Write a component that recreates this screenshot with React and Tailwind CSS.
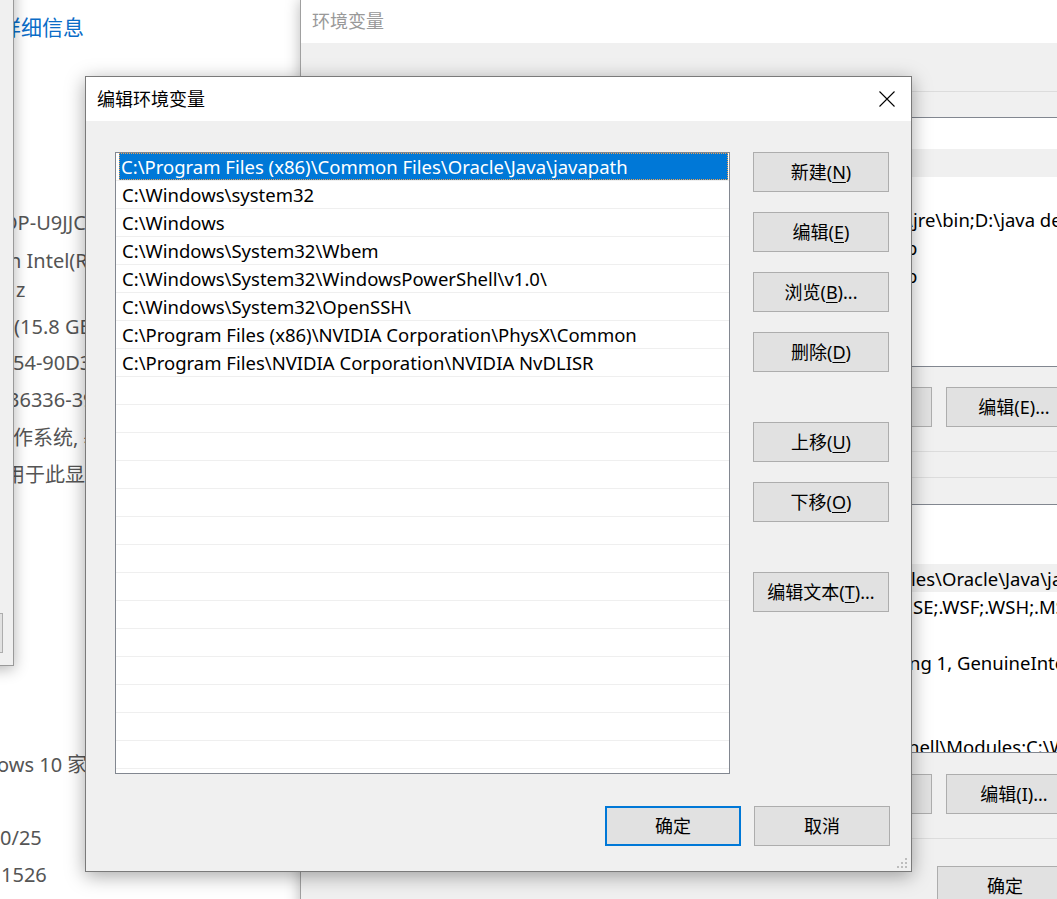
import React from 'react';

const paths = [
  'C:\\Program Files (x86)\\Common Files\\Oracle\\Java\\javapath',
  'C:\\Windows\\system32',
  'C:\\Windows',
  'C:\\Windows\\System32\\Wbem',
  'C:\\Windows\\System32\\WindowsPowerShell\\v1.0\\',
  'C:\\Windows\\System32\\OpenSSH\\',
  'C:\\Program Files (x86)\\NVIDIA Corporation\\PhysX\\Common',
  'C:\\Program Files\\NVIDIA Corporation\\NVIDIA NvDLISR',
];

// tails of the values that peek out from behind the dialog
const userVars = [
  { t: '' },
  { t: '' },
  { t: '\\jre\\bin;D:\\java development', pl: 'pl-[563px]' },
  { t: 'p', pl: 'pl-[563px]' },
  { t: 'p', pl: 'pl-[563px]' },
  { t: '' },
  { t: '' },
  { t: '' },
  { t: '' },
];
const sysVars = [
  { t: '' },
  { t: 'les\\Oracle\\Java\\javapath;C:\\Windows', pl: 'pl-[568px]' },
  { t: 'JSE;.WSF;.WSH;.MSC', pl: 'pl-[565px]' },
  { t: '' },
  { t: 'ng 1, GenuineIntel', pl: 'pl-[566px]' },
  { t: '' },
  { t: '' },
  { t: 'hell\\Modules;C:\\Windows', pl: 'pl-[565px]' },
];

function Key({ k }) {
  return <span className="underline underline-offset-[3px] decoration-1">{k}</span>;
}

function WinButton({ children, def }) {
  return (
    <div
      className={
        'h-[40px] w-[136px] shrink-0 flex items-center justify-center bg-[#e1e1e1] text-[18px] text-black leading-none ' +
        (def ? 'border-2 border-[#0078d7]' : 'border border-[#adadad]')
      }
    >
      {children}
    </div>
  );
}

function EnvList({ rows, selected, height }) {
  return (
    <div className={'ml-[18px] w-[900px] border border-[#828790] bg-white overflow-hidden ' + height}>
      <div className="h-[31px]" />
      {rows.map((r, i) => (
        <div
          key={i}
          className={
            'h-[28px] flex items-center pt-[1px] text-[18.5px] text-black whitespace-nowrap ' +
            (r.pl || '') +
            (i === selected ? ' bg-[#f0f0f0]' : '')
          }
        >
          {r.t}
        </div>
      ))}
    </div>
  );
}

function SettingsWindow() {
  return (
    <div className="absolute left-0 top-0 w-[300px] h-[899px] bg-white text-[20px] text-[#555] whitespace-nowrap overflow-hidden">
      <div className="pt-[14px]">
        <div className="h-[197px] leading-[26px] text-[21px] text-[#0a6cc7]">详细信息</div>
        <div className="h-[38px] leading-[24px] pl-[2px]">OP-U9JJC4L</div>
        <div className="h-[29px] leading-[24px] pl-[9px]">n Intel(R) Core(TM)</div>
        <div className="h-[37px] leading-[24px] pl-[16px]">z</div>
        <div className="h-[36px] leading-[24px] pl-[14px]">(15.8 GB 可用)</div>
        <div className="h-[37px] leading-[24px] pl-[13px]">54-90D3-4A1B</div>
        <div className="h-[38px] leading-[24px] pl-[8px]">36336-39</div>
        <div className="h-[37px] leading-[24px] pl-[13px]">作系统, 基于 x64</div>
        <div className="h-[290px] leading-[24px] pl-[5px]">用于此显示器</div>
        <div className="h-[73px] leading-[24px] ml-[-3px]">ows 10 家庭中文版</div>
        <div className="h-[37px] leading-[24px]">0/25</div>
        <div className="h-[37px] leading-[24px] pl-[1px]">1526</div>
      </div>
    </div>
  );
}

function SystemProps() {
  return (
    <div className="absolute left-[-400px] top-[-20px] w-[414px] h-[686px] bg-[#f0f0f0] border border-[#9a9a9a] shadow-[0_3px_14px_rgba(0,0,0,0.3)] flex flex-col justify-end items-end pb-[12px] pr-[10px]">
      <div className="h-[40px] w-[136px] bg-[#e1e1e1] border border-[#adadad]" />
    </div>
  );
}

function EnvWindow() {
  return (
    <div className="absolute left-[300px] top-0 w-[900px] h-[960px] bg-[#f0f0f0] border-l border-[#a0a0a0] shadow-[0_0_14px_rgba(0,0,0,0.28)]">
      <div className="h-[43px] bg-white flex items-center pl-[11px] text-[18px] text-[#999]">环境变量</div>
      <div className="pl-[22px] pt-[48px]">
        <div className="h-[361px] w-[900px] border border-[#dcdcdc] pt-[25px]">
          <EnvList rows={userVars} selected={0} height="h-[250px]" />
          <div className="flex gap-[14px] pl-[472px] mt-[20px]">
            <WinButton>新建(N)...</WinButton>
            <WinButton>编辑(E)...</WinButton>
            <WinButton>删除(D)</WinButton>
          </div>
        </div>
        <div className="h-[362px] w-[900px] border border-[#dcdcdc] pt-[26px] mt-[25px]">
          <EnvList rows={sysVars} selected={1} height="h-[249px]" />
          <div className="flex gap-[14px] pl-[472px] mt-[21px]">
            <WinButton>新建(W)...</WinButton>
            <WinButton>编辑(I)...</WinButton>
            <WinButton>删除(L)</WinButton>
          </div>
        </div>
        <div className="flex gap-[13px] pl-[614px] mt-[27px]">
          <WinButton>确定</WinButton>
          <WinButton>取消</WinButton>
        </div>
      </div>
    </div>
  );
}

function EditDialog() {
  const empty = Array.from({ length: 15 });
  return (
    <div className="absolute left-[85px] top-[76px] w-[827px] h-[796px] border border-[#7a7a7a] bg-[#f0f0f0] shadow-[0_4px_18px_rgba(0,0,0,0.35)] flex flex-col">
      <div className="h-[44px] shrink-0 bg-white flex items-center justify-between pl-[11px] pr-[16px]">
        <span className="text-[18px] text-black">编辑环境变量</span>
        <svg width="16" height="16" viewBox="0 0 16 16">
          <path d="M0.5 0.5L15.5 15.5M15.5 0.5L0.5 15.5" stroke="#000" strokeWidth="1.1" fill="none" />
        </svg>
      </div>
      <div className="flex-1 flex flex-col pl-[29px] pt-[31px] pr-[21px]">
        <div className="flex gap-[23px]">
          <div className="w-[615px] h-[622px] border border-[#828790] bg-white overflow-hidden">
            {paths.map((p, i) => (
              <div key={i} className="h-[28px] border-b border-[#efefef] text-[18.5px] whitespace-nowrap">
                {i === 0 ? (
                  <div className="h-[27px] ml-[3px] mr-[1px] bg-[#0078d7] text-white border border-dotted border-[#f0a050] flex items-center pt-[1px] pl-[1px]">
                    {p}
                  </div>
                ) : (
                  <div className="h-[27px] flex items-center pt-[1px] pl-[6px] text-black">{p}</div>
                )}
              </div>
            ))}
            {empty.map((_, i) => (
              <div key={i} className="h-[28px] border-b border-[#efefef]" />
            ))}
          </div>
          <div className="flex flex-col w-[136px]">
            <div className="flex flex-col gap-[20px]">
              <WinButton>新建(<Key k="N" />)</WinButton>
              <WinButton>编辑(<Key k="E" />)</WinButton>
              <WinButton>浏览(<Key k="B" />)...</WinButton>
              <WinButton>删除(<Key k="D" />)</WinButton>
            </div>
            <div className="flex flex-col gap-[20px] mt-[50px]">
              <WinButton>上移(<Key k="U" />)</WinButton>
              <WinButton>下移(<Key k="O" />)</WinButton>
            </div>
            <div className="mt-[50px]">
              <WinButton>编辑文本(<Key k="T" />)...</WinButton>
            </div>
          </div>
        </div>
        <div className="flex justify-end gap-[13px] mt-[32px]">
          <WinButton def>确定</WinButton>
          <WinButton>取消</WinButton>
        </div>
      </div>
      <svg className="absolute right-[2px] bottom-[1px]" width="12" height="12" viewBox="0 0 12 12">
        <g fill="#bdbdbd">
          <rect x="8" y="0" width="2" height="2" />
          <rect x="4" y="4" width="2" height="2" />
          <rect x="8" y="4" width="2" height="2" />
          <rect x="0" y="8" width="2" height="2" />
          <rect x="4" y="8" width="2" height="2" />
          <rect x="8" y="8" width="2" height="2" />
        </g>
      </svg>
    </div>
  );
}

export default function App() {
  return (
    <div className="relative w-[1057px] h-[899px] overflow-hidden bg-white font-['Noto_Sans','Noto_Sans_CJK_SC',sans-serif]">
      <SettingsWindow />
      <SystemProps />
      <EnvWindow />
      <EditDialog />
    </div>
  );
}
